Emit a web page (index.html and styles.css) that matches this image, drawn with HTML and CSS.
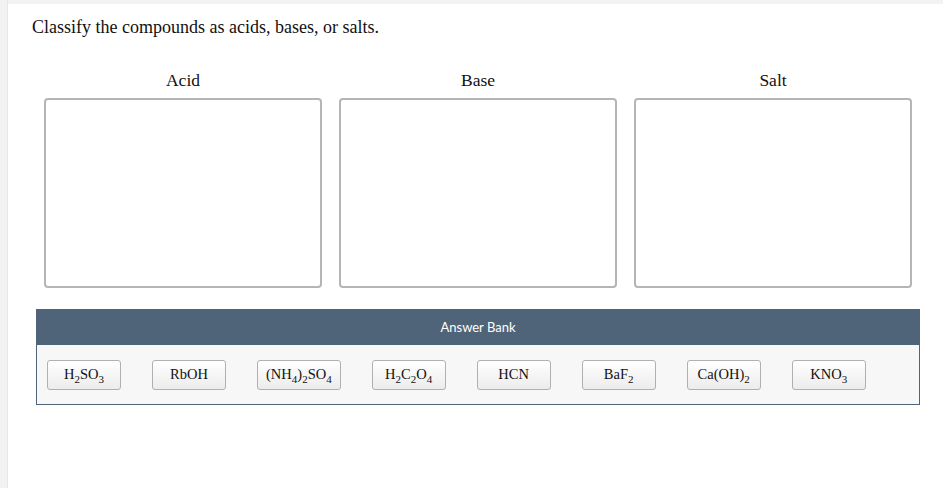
FILE: index.html
```html
<!DOCTYPE html>
<html>
<head>
<meta charset="utf-8">
<link rel="stylesheet" href="styles.css">
</head>
<body>
<div class="panel">
  <p class="prompt">Classify the compounds as acids, bases, or salts.</p>
  <div class="zones">
    <div class="zone">
      <div class="zone-label">Acid</div>
      <div class="zone-box"></div>
    </div>
    <div class="zone">
      <div class="zone-label">Base</div>
      <div class="zone-box"></div>
    </div>
    <div class="zone">
      <div class="zone-label">Salt</div>
      <div class="zone-box"></div>
    </div>
  </div>
  <div class="bank">
    <div class="bank-head">Answer Bank</div>
    <div class="bank-body">
      <div class="chip">H<sub>2</sub>SO<sub>3</sub></div>
      <div class="chip">RbOH</div>
      <div class="chip">(NH<sub>4</sub>)<sub>2</sub>SO<sub>4</sub></div>
      <div class="chip">H<sub>2</sub>C<sub>2</sub>O<sub>4</sub></div>
      <div class="chip">HCN</div>
      <div class="chip">BaF<sub>2</sub></div>
      <div class="chip">Ca(OH)<sub>2</sub></div>
      <div class="chip">KNO<sub>3</sub></div>
    </div>
  </div>
</div>
</body>
</html>
```

FILE: styles.css
```css
html, body {
  margin: 0;
  padding: 0;
  height: 100%;
}
body {
  background: #f2f2f2;
  font-family: "Liberation Serif", "Times New Roman", serif;
  color: #111;
}
.panel {
  margin-left: 7px;
  padding-top: 4px;
  height: 100%;
  box-sizing: border-box;
  background: linear-gradient(#f2f2f2, #f2f2f2) top / 100% 4px no-repeat, #fff;
  border-left: 1px solid #e6e6e6;
}
.prompt {
  margin: 0;
  padding: 13px 0 0 24px;
  font-size: 18px;
  line-height: 20px;
}
.zones {
  display: flex;
  gap: 17px;
  margin: 33px 0 0 36px;
}
.zone {
  width: 278px;
  display: flex;
  flex-direction: column;
  align-items: center;
}
.zone-label {
  font-size: 17.5px;
  line-height: 20px;
  margin-bottom: 8px;
}
.zone-box {
  width: 278px;
  height: 190px;
  box-sizing: border-box;
  border: 2px solid #b5b5b5;
  border-radius: 4px;
  background: #fff;
}
.bank {
  margin: 21px 0 0 28px;
  width: 884px;
  box-sizing: border-box;
  border: 1px solid #4f6479;
  border-top: none;
}
.bank-head {
  background: #4f6479;
  color: #fff;
  font-family: "Lato", "Open Sans", sans-serif;
  font-size: 13px;
  height: 36px;
  line-height: 36px;
  text-align: center;
}
.bank-body {
  background: #f7f7f7;
  display: flex;
  gap: 31px;
  padding: 15px 10px 14px;
}
.chip {
  min-width: 74px;
  height: 30px;
  box-sizing: border-box;
  padding: 0 8px;
  border: 1px solid #b0b0b0;
  border-radius: 3px;
  background: linear-gradient(#ffffff, #ececec);
  font-size: 14.5px;
  line-height: 27px;
  text-align: center;
  white-space: nowrap;
}
.chip sub {
  font-size: 11px;
  line-height: 0;
  vertical-align: -4px;
}
```
